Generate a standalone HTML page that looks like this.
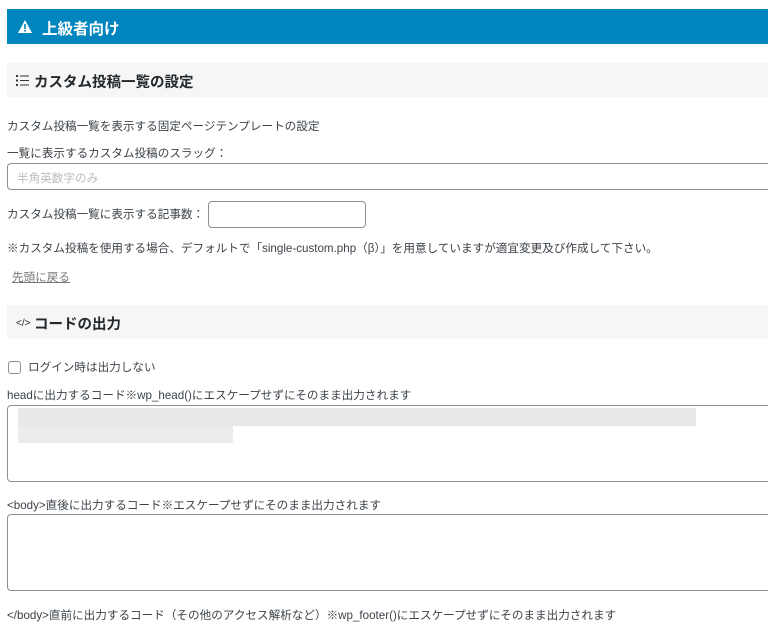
<!DOCTYPE html>
<html><head><meta charset="utf-8"><style>
body{margin:0;width:768px;height:621px;overflow:hidden;background:#fff;font-family:"Liberation Sans","Noto Sans CJK JP",sans-serif;color:#3c434a;font-size:11.6px;position:relative}
.a{position:absolute;white-space:nowrap}
.blue{left:7px;top:9px;width:761px;height:35px;background:#0085be;color:#fff;font-weight:bold;font-size:15.5px}
.sec{left:7px;width:761px;height:34px;background:#f6f6f6;font-weight:bold;font-size:14.5px;color:#23282d}
.inp{border:1px solid #8c8f94;border-radius:4px;background:#fff;box-sizing:border-box}
.ph{color:#b9bcc0}
</style></head><body>
<div class="a blue"><svg style="position:absolute;left:11px;top:11px" width="14" height="13" viewBox="0 0 14 13"><path d="M7 0L14 13H0Z" fill="#fff"/><rect x="6.2" y="4" width="1.6" height="5" fill="#0085be"/><rect x="6.2" y="10" width="1.6" height="1.6" fill="#0085be"/></svg><span style="position:absolute;left:35px;top:8px">上級者向け</span></div>

<div class="a sec" style="top:63px"><svg style="position:absolute;left:9px;top:12px" width="13" height="11" viewBox="0 0 13 11"><g fill="#333"><rect x="0" y="0" width="2" height="2"/><rect x="0" y="4.5" width="2" height="2"/><rect x="0" y="9" width="2" height="2"/><rect x="4" y="0.5" width="9" height="1"/><rect x="4" y="5" width="9" height="1"/><rect x="4" y="9.5" width="9" height="1"/></g></svg><span style="position:absolute;left:27px;top:8px">カスタム投稿一覧の設定</span></div>

<div class="a" style="left:7px;top:118px">カスタム投稿一覧を表示する固定ページテンプレートの設定</div>
<div class="a" style="left:7px;top:145px">一覧に表示するカスタム投稿のスラッグ：</div>
<div class="a inp" style="left:7px;top:163px;width:770px;height:27px"><span class="ph" style="position:absolute;left:9px;top:6px">半角英数字のみ</span></div>
<div class="a" style="left:7px;top:206px">カスタム投稿一覧に表示する記事数：</div>
<div class="a inp" style="left:208px;top:201px;width:158px;height:27px"></div>
<div class="a" style="left:7px;top:240px">※カスタム投稿を使用する場合、デフォルトで「single-custom.php（β）」を用意していますが適宜変更及び作成して下さい。</div>
<div class="a" style="left:12px;top:269px;color:#777;text-decoration:underline">先頭に戻る</div>

<div class="a sec" style="top:305px"><span style="position:absolute;left:9px;top:14px;font-size:10px;line-height:10px;font-weight:normal">&lt;/&gt;</span><span style="position:absolute;left:27px;top:8px">コードの出力</span></div>

<div class="a inp" style="left:8px;top:361px;width:13px;height:13px;border-radius:3px"></div>
<div class="a" style="left:28px;top:359px">ログイン時は出力しない</div>
<div class="a" style="left:7px;top:387px">headに出力するコード※wp_head()にエスケープせずにそのまま出力されます</div>
<div class="a inp" style="left:7px;top:405px;width:770px;height:77px">
<div style="position:absolute;left:10px;top:2px;width:678px;height:18px;background:#e8e8e8"></div>
<div style="position:absolute;left:10px;top:20px;width:215px;height:17px;background:#ececec"></div>
</div>
<div class="a" style="left:7px;top:497px">&lt;body&gt;直後に出力するコード※エスケープせずにそのまま出力されます</div>
<div class="a inp" style="left:7px;top:514px;width:770px;height:77px"></div>
<div class="a" style="left:7px;top:607px">&lt;/body&gt;直前に出力するコード（その他のアクセス解析など）※wp_footer()にエスケープせずにそのまま出力されます</div>
</body></html>
